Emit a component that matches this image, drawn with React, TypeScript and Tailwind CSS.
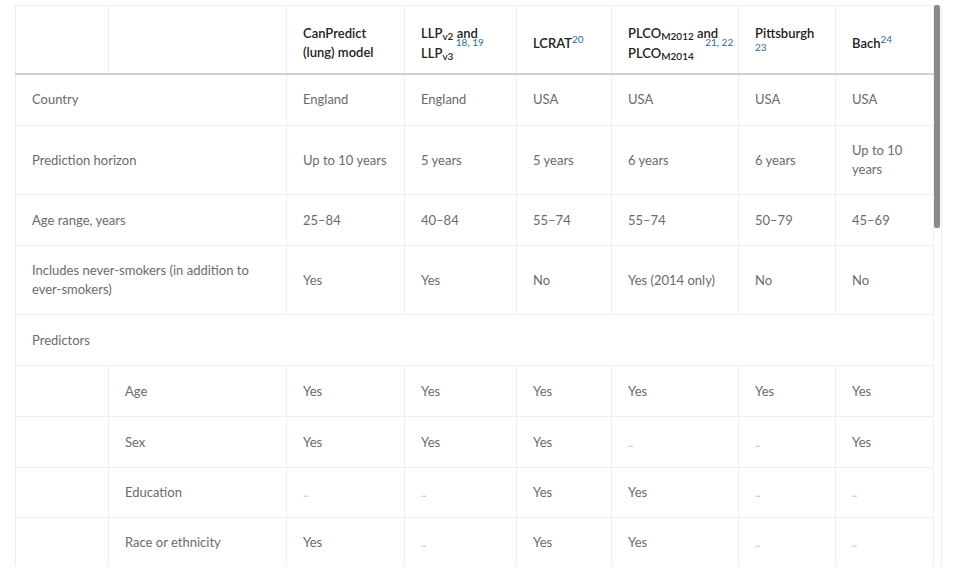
// Tabla comparativa de modelos de riesgo de cancer de pulmon

const REF = "text-[10px] font-normal text-[#2f6a9a]";
const TAIL = "inline-block w-0 whitespace-nowrap relative top-[8px] text-[10px] font-normal text-[#2f6a9a]";

type Row = { label: string; cells: string[]; h: string };

const rows: Row[] = [
  { label: "Country", cells: ["England", "England", "USA", "USA", "USA", "USA"], h: "h-[52px]" },
  { label: "Prediction horizon", cells: ["Up to 10 years", "5 years", "5 years", "6 years", "6 years", "Up to 10 years"], h: "h-[69px]" },
  { label: "Age range, years", cells: ["25–84", "40–84", "55–74", "55–74", "50–79", "45–69"], h: "h-[51px]" },
  { label: "Includes never-smokers (in addition to ever-smokers)", cells: ["Yes", "Yes", "No", "Yes (2014 only)", "No", "No"], h: "h-[69px]" },
];

const predictors: Row[] = [
  { label: "Age", cells: ["Yes", "Yes", "Yes", "Yes", "Yes", "Yes"], h: "h-[51px]" },
  { label: "Sex", cells: ["Yes", "Yes", "Yes", "..", "..", "Yes"], h: "h-[51px]" },
  { label: "Education", cells: ["..", "..", "Yes", "Yes", "..", ".."], h: "h-[50px]" },
  { label: "Race or ethnicity", cells: ["Yes", "..", "Yes", "Yes", "..", ".."], h: "h-[49px]" },
];

const TH = "border border-[#eeeeee] border-b-2 border-b-[#cfcfcf] px-4 pt-[8px] font-semibold";

function Cell({ value }: { value: string }) {
  const empty = value === "..";
  return (
    <td className={`border border-[#eeeeee] px-4 align-middle ${empty ? "text-[#b0b0b0] text-[11px]" : "text-[#6b6b6b]"}`}>
      {value}
    </td>
  );
}

export default function App() {
  return (
    <div className="bg-white w-[960px] h-[586px] pl-[15px] pt-[5px]" style={{ fontFamily: "Lato, 'Open Sans', sans-serif" }}>
      <div className="relative w-[927px] h-[561px] overflow-hidden border-r border-[#ececec]">
        <table className="table-fixed w-[918px] border-collapse text-[13px] leading-[19px]">
          <colgroup>
            <col className="w-[93px]" />
            <col className="w-[178px]" />
            <col className="w-[118px]" />
            <col className="w-[112px]" />
            <col className="w-[95px]" />
            <col className="w-[127px]" />
            <col className="w-[97px]" />
            <col className="w-[98px]" />
          </colgroup>
          <thead>
            <tr className="h-[68px] text-left text-[#222]">
              <th className="border border-[#eeeeee] border-b-2 border-b-[#cfcfcf]" />
              <th className="border border-[#eeeeee] border-b-2 border-b-[#cfcfcf]" />
              <th className={TH}>
                CanPredict<br />(lung) model
              </th>
              <th className={TH}>
                <span className="whitespace-nowrap">
                  LLP<sub className="text-[10px]">v2</sub> and<span className={`${TAIL} -ml-[22px]`}>18, 19</span>
                </span>
                <br />
                LLP<sub className="text-[10px]">v3</sub>
              </th>
              <th className={TH}>
                LCRAT<sup className={REF}>20</sup>
              </th>
              <th className={TH}>
                <span className="whitespace-nowrap">
                  PLCO<sub className="text-[10px]">M2012</sub> and<span className={`${TAIL} -ml-[13px]`}>21, 22</span>
                </span>
                <br />
                PLCO<sub className="text-[10px]">M2014</sub>
              </th>
              <th className={TH}>
                Pittsburgh
                <br />
                <span className={`${REF} relative -top-[6px]`}>23</span>
                <span className="invisible">x</span>
              </th>
              <th className={TH}>
                Bach<sup className={REF}>24</sup>
              </th>
            </tr>
          </thead>
          <tbody>
            {rows.map((r) => (
              <tr key={r.label} className={r.h}>
                <td colSpan={2} className="border border-[#eeeeee] px-4 text-[#6b6b6b] align-middle">
                  <span className="block w-[230px]">{r.label}</span>
                </td>
                {r.cells.map((c, i) => (
                  <Cell key={i} value={c} />
                ))}
              </tr>
            ))}
            <tr className="h-[51px]">
              <td colSpan={8} className="border border-[#eeeeee] px-4 text-[#6b6b6b]">
                Predictors
              </td>
            </tr>
            {predictors.map((r) => (
              <tr key={r.label} className={r.h}>
                <td className="border border-[#eeeeee]" />
                <td className="border border-[#eeeeee] px-4 text-[#6b6b6b]">{r.label}</td>
                {r.cells.map((c, i) => (
                  <Cell key={i} value={c} />
                ))}
              </tr>
            ))}
          </tbody>
        </table>
        {/* barra de scroll */}
        <div className="absolute right-[1px] top-0 w-[6px] h-[223px] rounded-[2px] bg-[#8a8a8a]" />
      </div>
    </div>
  );
}
